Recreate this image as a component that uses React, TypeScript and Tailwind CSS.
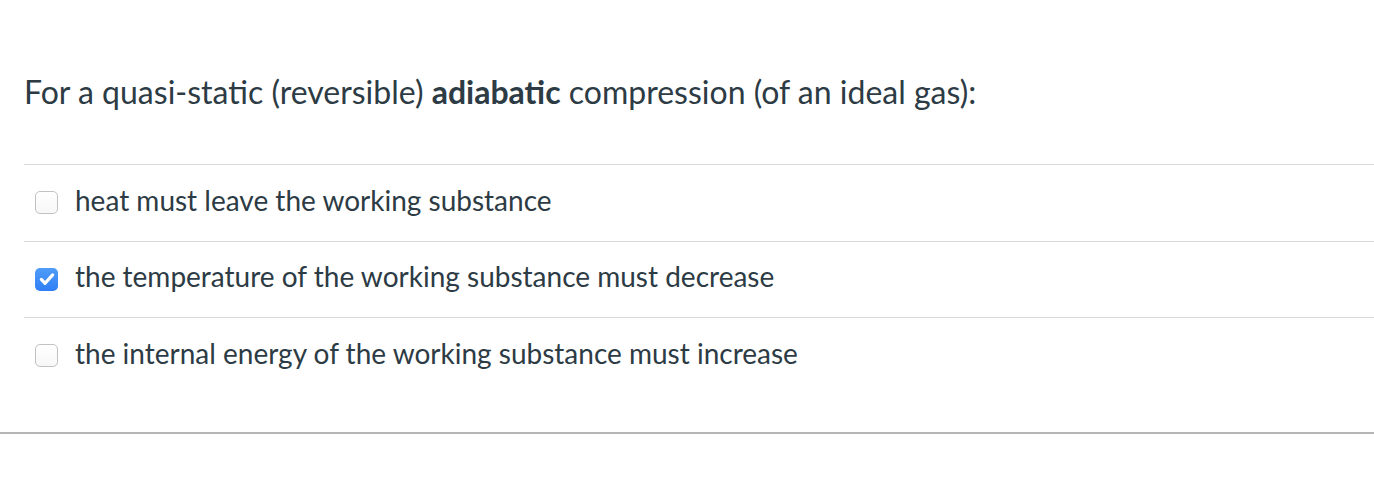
import React from 'react';

const answers = [
  { text: 'heat must leave the working substance', checked: false },
  { text: 'the temperature of the working substance must decrease', checked: true },
  { text: 'the internal energy of the working substance must increase', checked: false },
];

const Checkbox: React.FC<{ checked: boolean }> = ({ checked }) =>
  checked ? (
    <span className="flex h-[23px] w-[23px] shrink-0 items-center justify-center rounded-[5px] bg-gradient-to-b from-[#4f9cf9] to-[#2f7ef5]">
      <svg viewBox="0 0 16 16" className="h-[18px] w-[18px]" fill="none">
        <path d="M3 8.4l3.3 3.4L13 4.4" stroke="white" strokeWidth="2.9" strokeLinecap="round" strokeLinejoin="round" />
      </svg>
    </span>
  ) : (
    <span className="block h-[23px] w-[23px] shrink-0 rounded-[5px] border border-[#c2c2c2] bg-gradient-to-b from-white to-[#f7f7f7]" />
  );

export default function App() {
  return (
    <div className="min-h-[480px] bg-white font-['Lato',sans-serif] text-[#2d3b45]">
      <div className="pt-[69px]">
        <h2 className="pl-[24px] text-[32px] leading-[46px]">
          For a quasi-static (reversible) <strong className="font-bold">adiabatic</strong> compression (of an ideal gas):
        </h2>
        <div className="mt-[49px] pl-[24px]">
          {answers.map((a) => (
            <div key={a.text} className="flex h-[76.5px] items-center gap-[17px] border-t border-[#dadada] pl-[11px]">
              <Checkbox checked={a.checked} />
              <span className="text-[28px] leading-[34px] -translate-y-[3px]">{a.text}</span>
            </div>
          ))}
        </div>
        <div className="mt-[38px] h-[2px] bg-[#b5b5b5]" />
      </div>
    </div>
  );
}
